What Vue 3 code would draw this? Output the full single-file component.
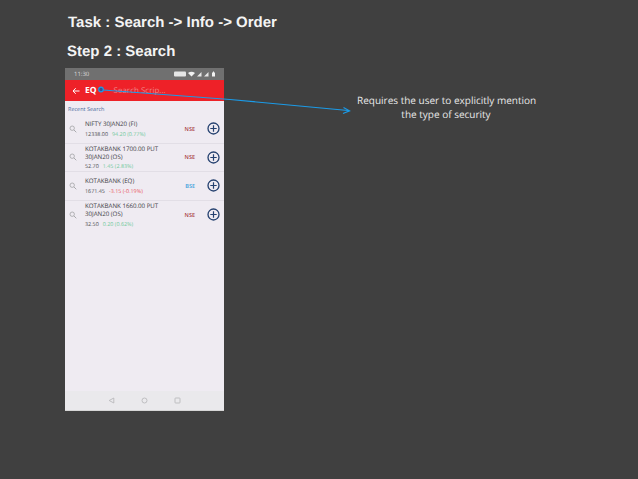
<template>
  <div class="slide">
    <h1 class="task">Task : Search -> Info -> Order</h1>
    <h2 class="step">Step 2 : Search</h2>

    <div class="content">
      <div class="phone">
        <div class="status">
          <span>11:30</span>
          <svg width="42" height="6" viewBox="0 0 42 6">
            <rect x="0" y="0.5" width="12" height="5" rx="1" fill="#e6e6e6" />
            <path d="M14 2 Q17.5 -0.5 21 2 L17.5 5.5 Z" fill="#f2f2f2" />
            <path d="M23 5.5 L27.5 1 V5.5 Z M30 5.5 L34.500 1 V5.5 Z" fill="#e6e6e6" />
            <path d="M38 1.500 H41 V5.500 H38 Z M39 .5 H40 V1.500 H39 Z" fill="#f2f2f2" />
          </svg>
        </div>
        <div class="appbar">
          <svg class="back" width="8" height="8" viewBox="0 0 8 8">
            <path d="M7.500 4 H1 M3.700 1.200 L1 4 L3.700 6.800" fill="none" stroke="#fff" stroke-width="1" />
          </svg>
          <span class="segment">EQ</span>
          <span class="hint">Search Scrip...</span>
        </div>

        <div class="list">
          <div class="recent">Recent Search</div>
          <div class="row" v-for="item in items" :key="item.name">
            <svg class="lens" width="8" height="8" viewBox="0 0 8 8">
              <circle cx="3.200" cy="3.200" r="2.200" fill="none" stroke="#a9a9ad" stroke-width="0.9" />
              <path d="M4.900 4.900 L7.300 7.300" stroke="#a9a9ad" stroke-width="1" />
            </svg>
            <div class="info">
              <div class="name">{{ item.name }}</div>
              <div class="price">
                <span class="last">{{ item.last }}</span>
                <span :class="item.down ? 'down' : 'up'">{{ item.change }}</span>
              </div>
            </div>
            <span class="exch" :class="item.exch.toLowerCase()">{{ item.exch }}</span>
            <svg class="add" width="13" height="13" viewBox="0 0 13 13">
              <circle cx="6.500" cy="6.500" r="5.500" fill="none" stroke="#24406f" stroke-width="1.300" />
              <path d="M6.500 3.300 V9.700 M3.300 6.500 H9.700" stroke="#24406f" stroke-width="1.200" />
            </svg>
          </div>
        </div>

        <div class="navbar">
          <svg width="7" height="7" viewBox="0 0 7 7">
            <path d="M5.800 1 V6 L1.200 3.500 Z" fill="none" stroke="#b4b4b6" stroke-width="0.800" />
          </svg>
          <svg width="7" height="7" viewBox="0 0 7 7">
            <circle cx="3.500" cy="3.500" r="2.500" fill="none" stroke="#b4b4b6" stroke-width="0.800" />
          </svg>
          <svg width="7" height="7" viewBox="0 0 7 7">
            <rect x="1" y="1" width="5" height="5" rx="0.600" fill="none" stroke="#b4b4b6" stroke-width="0.800" />
          </svg>
        </div>
      </div>

      <p class="note">Requires the user to explicitly mention<br />the type of security</p>
    </div>

    <svg class="arrow" width="638" height="479" viewBox="0 0 638 479">
      <circle cx="101" cy="89.500" r="2.300" fill="#3f4f8c" stroke="#1b9be8" stroke-width="1.200" />
      <path d="M103 90 L230 99.500 L348 110.500" fill="none" stroke="#1b9be8" stroke-width="1.200" />
      <path d="M343.500 107.500 L349.500 110.800 L343 113.500" fill="none" stroke="#1b9be8" stroke-width="1.200" />
    </svg>
  </div>
</template>

<script setup>
const items = [
  { name: 'NIFTY 30JAN20 (FI)', last: '12338.00', change: '94.20 (0.77%)', exch: 'NSE' },
  { name: 'KOTAKBANK 1700.00 PUT 30JAN20 (OS)', last: '52.70', change: '1.45 (2.83%)', exch: 'NSE' },
  { name: 'KOTAKBANK (EQ)', last: '1671.45', change: '-3.15 (-0.19%)', exch: 'BSE', down: true },
  { name: 'KOTAKBANK 1660.00 PUT 30JAN20 (OS)', last: '32.50', change: '0.20 (0.62%)', exch: 'NSE' },
]
</script>

<style>
html,
body {
  margin: 0;
  background: #404040;
}
</style>

<style scoped>
.slide {
  position: relative;
  box-sizing: border-box;
  width: 638px;
  height: 479px;
  padding: 14px 0 0 65px;
  background: #404040;
  overflow: hidden;
  text-rendering: geometricPrecision;
}

.task,
.step {
  margin: 0;
  color: #f4f4f4;
  font-family: "Liberation Sans", Arial, sans-serif;
  font-weight: 700;
  line-height: 18px;
  font-size: 15px;
}

.task {
  margin-left: 3px;
}

.step {
  margin: 10px 0 8px 2px;
  padding-top: 1px;
  height: 17px;
}

.content {
  display: flex;
  align-items: flex-start;
}

.phone {
  display: flex;
  flex-direction: column;
  flex: none;
  width: 159px;
  height: 343px;
  background: #efebf2;
  font-family: "Open Sans", sans-serif;
}

.status {
  display: flex;
  align-items: center;
  justify-content: space-between;
  height: 12px;
  padding: 0 8px 0 9px;
  background: #707070;
  color: #dcdcdc;
  font-size: 6px;
}

.appbar {
  display: flex;
  align-items: center;
  height: 21px;
  padding-left: 7px;
  background: #ee2128;
  color: #fff;
}

.back {
  flex: none;
}

.segment {
  margin-left: 5px;
  font-size: 8.500px;
  font-weight: 700;
}

.hint {
  margin-left: 17px;
  color: #ee8286;
  font-size: 8px;
}

.list {
  flex: 1;
}

.recent {
  padding: 3px 0 0 3px;
  height: 11px;
  color: #4a6a9c;
  font-size: 5.500px;
  line-height: 11px;
}

.row {
  display: flex;
  align-items: center;
  box-sizing: border-box;
  height: 28.500px;
  padding: 0 4px 0 3.500px;
  border-bottom: 1px solid #e2dee6;
}

.row:last-child {
  border-bottom: 0;
}

.lens {
  flex: none;
}

.info {
  flex: none;
  width: 80px;
  margin-left: 8.500px;
}

.name {
  color: #3d3d45;
  font-size: 6.150px;
  line-height: 8px;
}

.price {
  margin-top: 2.500px;
  font-size: 5.400px;
  line-height: 7px;
  white-space: nowrap;
}

.last {
  margin-right: 4px;
  color: #4c4c52;
}

.up {
  color: #6fc99a;
}

.down {
  color: #e9575e;
}

.exch {
  margin-left: auto;
  font-size: 5.500px;
  font-weight: 600;
}

.nse {
  color: #a83a44;
}

.bse {
  color: #3f9fdc;
}

.add {
  flex: none;
  margin-left: 12px;
}

.navbar {
  display: flex;
  align-items: center;
  justify-content: center;
  gap: 26px;
  height: 19px;
  background: #eae9ec;
  border-bottom: 1px solid #d6d6d6;
}

.note {
  margin: 25px 0 0 133px;
  width: 178px;
  color: #e9e9e9;
  font-family: "Open Sans", sans-serif;
  font-size: 10px;
  line-height: 14px;
  text-align: center;
  white-space: nowrap;
}

.arrow {
  position: absolute;
  top: 0;
  left: 0;
  pointer-events: none;
}
</style>
